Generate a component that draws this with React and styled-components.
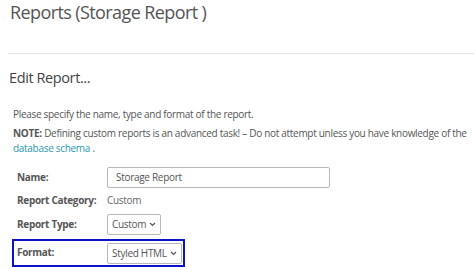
import React from "react";
import styled, { createGlobalStyle } from "styled-components";

const Global = createGlobalStyle`
  html, body { margin: 0; padding: 0; background: #fff; }
  body { font-family: "Open Sans", "Noto Sans", sans-serif; color: #555; overflow: hidden; }
`;

const Page = styled.div`
  width: 474px;
  height: 267px;
  overflow: hidden;
`;

const Title = styled.h1`
  margin: 0;
  padding: 0 0 0 10px;
  font-size: 18px;
  letter-spacing: -0.6px;
  line-height: 24px;
  font-weight: 400;
  color: #555;
`;

const Divider = styled.hr`
  margin: 29px 0 0 8px;
  border: 0;
  border-top: 1px solid #e6e6e6;
`;

const Section = styled.div`
  padding: 14px 0 0 9px;
`;

const SectionTitle = styled.h2`
  margin: 0;
  font-size: 14.5px;
  letter-spacing: -0.4px;
  line-height: 20px;
  font-weight: 400;
  color: #444;
`;

const Body = styled.div`
  padding: 19px 0 0 4px;
  font-size: 10px;
  letter-spacing: -0.3px;
  line-height: 15px;
  color: #555;
`;

const Para = styled.p`
  margin: 0 0 ${(p) => p.$mb || 0}px 0;
  white-space: ${(p) => (p.$nowrap ? "nowrap" : "normal")};
`;

const Link = styled.a`
  color: #2b9aaf;
  text-decoration: none;
`;

const Form = styled.div`
  display: flex;
  flex-direction: column;
  align-items: flex-start;
  margin: 9px 0 0 -1px;
`;

const Row = styled.div`
  display: grid;
  grid-template-columns: 90px auto;
  align-items: center;
  height: ${(p) => p.$h}px;
  padding-left: 5px;
  ${(p) => p.$highlight && `
    box-sizing: border-box;
    border: 2px solid #0b12c8;
    padding: 0 1px 0 3px;
    margin-top: 2px;
  `}
`;

const Label = styled.span`
  font-weight: 700;
  color: #555;
  align-self: ${(p) => (p.$top ? "start" : "center")};
  padding-top: ${(p) => (p.$top ? "4px" : "0")};
`;

const Value = styled.span`
  color: #666;
`;

const TextInput = styled.div`
  box-sizing: border-box;
  width: 223px;
  height: 21px;
  border: 1px solid #b8b8b8;
  border-radius: 2px;
  padding: 0 8px;
  display: flex;
  align-items: center;
  color: #555;
`;

const Select = styled.div`
  box-sizing: border-box;
  height: 21px;
  border: 1px solid #b8b8b8;
  border-radius: 2px;
  padding: 0 4px;
  display: inline-flex;
  align-items: center;
  gap: 3px;
  color: #555;
  justify-self: start;
  align-self: ${(p) => (p.$end ? "end" : "center")};
  margin-bottom: ${(p) => (p.$end ? "1px" : "0")};
`;

const Chevron = () => (
  <svg width="7" height="5" viewBox="0 0 7 5">
    <path d="M1 1 L3.5 3.5 L6 1" fill="none" stroke="#555" strokeWidth="1.2" />
  </svg>
);

export default function App() {
  return (
    <Page>
      <Global />
      <Title>Reports (Storage Report )</Title>
      <Divider />
      <Section>
        <SectionTitle>Edit Report...</SectionTitle>
        <Body>
          <Para $mb={4}>Please specify the name, type and format of the report.</Para>
          <Para $nowrap>
            <b>NOTE:</b> Defining custom reports is an advanced task! – Do not attempt unless you have knowledge of the
          </Para>
          <Para>
            <Link href="#">database schema</Link> .
          </Para>
          <Form>
            <Row $h={24}>
              <Label>Name:</Label>
              <TextInput>Storage Report</TextInput>
            </Row>
            <Row $h={22}>
              <Label>Report Category:</Label>
              <Value>Custom</Value>
            </Row>
            <Row $h={26}>
              <Label>Report Type:</Label>
              <Select>Custom <Chevron /></Select>
            </Row>
            <Row $h={28} $highlight>
              <Label $top>Format:</Label>
              <Select $end>Styled HTML <Chevron /></Select>
            </Row>
          </Form>
        </Body>
      </Section>
    </Page>
  );
}
